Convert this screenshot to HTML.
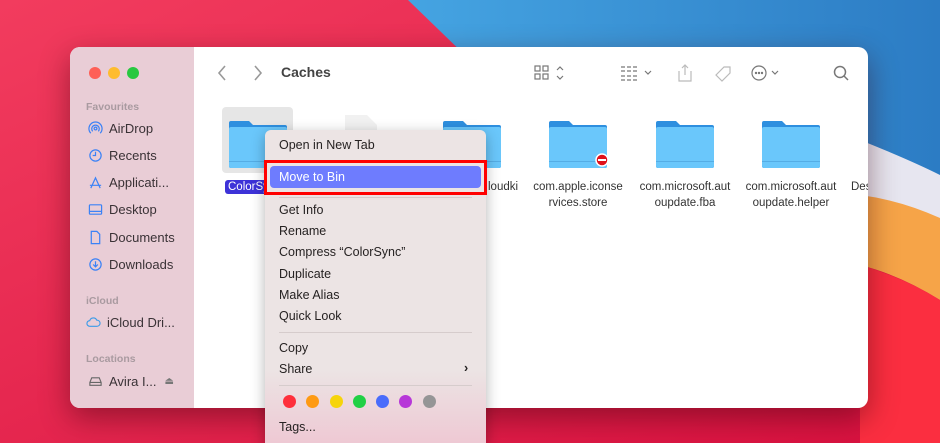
<!DOCTYPE html>
<html><head><style>
*{margin:0;padding:0;box-sizing:border-box}
html,body{width:940px;height:443px;overflow:hidden}
body{position:relative;font-family:"Liberation Sans",sans-serif;}
.bg{position:absolute;left:0;top:0}
.win{position:absolute;left:70px;top:47px;width:798px;height:361px;border-radius:10px;background:#fff;overflow:hidden;box-shadow:0 10px 30px rgba(60,0,10,.45)}
.side{position:absolute;left:0;top:0;width:124px;height:361px;background:#e9cdd6}
.dot{position:absolute;top:20px;width:12px;height:12px;border-radius:50%}
.sh{position:absolute;left:16px;font-size:10.5px;color:#a99aa0;font-weight:bold}
.si{position:absolute;left:18px;font-size:13px;color:#3a3236;display:flex;align-items:center;gap:6px}
.si svg{width:15px;height:15px}
.t{position:absolute;color:#3d3d3d;font-size:13px}
.lbl{position:absolute;font-size:11.5px;color:#333;text-align:center;line-height:16px;width:110px}
.menu{position:absolute;left:265px;top:130px;width:221px;height:320px;border-radius:6px;background:linear-gradient(#ece4e4 0,#ece4e4 240px,#eec6d2 320px);box-shadow:0 4px 14px rgba(0,0,0,.3);}
.mi{position:absolute;left:14px;font-size:12.5px;color:#262222}
.sep{position:absolute;left:14px;right:14px;height:1px;background:#d6cccc}
.cd{position:absolute;top:265px;width:13px;height:13px;border-radius:50%}
</style></head><body>
<svg class="bg" width="940" height="443">
<defs>
<linearGradient id="r" x1="0" y1="0" x2="1" y2="1"><stop offset="0" stop-color="#f23c5e"/><stop offset="1" stop-color="#d8103f"/></linearGradient>
<linearGradient id="b" x1="0" y1="0" x2="1" y2="0"><stop offset="0" stop-color="#45a4e2"/><stop offset="1" stop-color="#2c7cc4"/></linearGradient>
</defs>
<rect width="940" height="443" fill="url(#r)"/>
<path d="M408 0 L940 0 L940 200 Q700 130 470 60 Z" fill="url(#b)"/>
<path d="M860 190 Q910 200 940 215 L940 300 Q900 275 860 265 Z" fill="#f6a448"/>
<path d="M860 140 Q910 160 940 175 L940 218 Q900 200 860 195Z" fill="#e7e6f0"/>
<path d="M860 265 Q905 278 940 300 L940 443 L860 443Z" fill="#fb2e40"/>
</svg>
<div class="win">
<div class="side">
<div class="dot" style="left:19px;background:#fe5f57"></div>
<div class="dot" style="left:38px;background:#febc2e"></div>
<div class="dot" style="left:57px;background:#28c840"></div>
<div class="sh" style="top:54px">Favourites</div>
<div class="si" style="top:74px"><svg viewBox="0 0 16 16" fill="none" stroke="#3b82f6" stroke-width="1.3"><circle cx="8" cy="8" r="1.5"/><path d="M5 11a4 4 0 1 1 6 0M3 13a7 7 0 1 1 10 0"/></svg>AirDrop</div>
<div class="si" style="top:101px"><svg viewBox="0 0 16 16" fill="none" stroke="#3b82f6" stroke-width="1.3"><circle cx="8" cy="8" r="6"/><path d="M8 4v4H5"/></svg>Recents</div>
<div class="si" style="top:128px"><svg viewBox="0 0 16 16" fill="none" stroke="#3b82f6" stroke-width="1.3"><path d="M3 14 8 3l5 11M2 11h12"/></svg>Applicati...</div>
<div class="si" style="top:155px"><svg viewBox="0 0 16 16" fill="none" stroke="#3b82f6" stroke-width="1.3"><rect x="1.5" y="3" width="13" height="10" rx="1"/><path d="M1.5 10h13"/></svg>Desktop</div>
<div class="si" style="top:183px"><svg viewBox="0 0 16 16" fill="none" stroke="#3b82f6" stroke-width="1.3"><path d="M3.5 1.5h6l3 3v10h-9z"/></svg>Documents</div>
<div class="si" style="top:210px"><svg viewBox="0 0 16 16" fill="none" stroke="#3b82f6" stroke-width="1.3"><circle cx="8" cy="8" r="6"/><path d="M8 4.5v6M5.5 8l2.5 2.5L10.5 8"/></svg>Downloads</div>
<div class="sh" style="top:248px">iCloud</div>
<div class="si" style="top:268px;left:16px"><svg viewBox="0 0 16 16" fill="none" stroke="#3b9be8" stroke-width="1.2"><path d="M4 12a3 3 0 0 1 0-6 4 4 0 0 1 7.5-.5A3 3 0 0 1 12 12z"/></svg>iCloud Dri...</div>
<div class="sh" style="top:306px">Locations</div>
<div class="si" style="top:327px"><svg viewBox="0 0 16 16" fill="none" stroke="#666" stroke-width="1.2"><path d="M2 9 4 4h8l2 5v3H2z M2 9h12"/></svg>Avira I... <span style="color:#777;font-size:10px;margin-left:2px">⏏</span></div>
</div>
<svg style="position:absolute;left:145px;top:17px" width="50" height="18" fill="none" stroke="#999" stroke-width="1.6"><path d="M10 2 4 9l6 7"/><path d="M40 2l6 7-6 7"/></svg>
<div class="t" style="left:211px;top:17px;font-size:14px;font-weight:bold;color:#444">Caches</div>
<svg style="position:absolute;left:462px;top:16px" width="340" height="20" fill="none" stroke="#777" stroke-width="1.2">
<rect x="3" y="3" width="5" height="5"/><rect x="11" y="3" width="5" height="5"/><rect x="3" y="11" width="5" height="5"/><rect x="11" y="11" width="5" height="5"/>
<path d="M25 7l3-3 3 3M25 13l3 3 3-3"/>
<path d="M89 4h16M89 8h16M89 13h16M89 17h16" stroke-dasharray="4 2"/>
<path d="M113 8l3 3 3-3"/>
<path d="M150 5l3-3 3 3M153 2v10M147 8v10h12V8" stroke="#bbb"/>
<path d="M184 12l8-8h6v6l-8 8z" stroke="#bbb"/>
<circle cx="227" cy="10" r="7"/><circle cx="224" cy="10" r=".6"/><circle cx="227" cy="10" r=".6"/><circle cx="230" cy="10" r=".6"/>
<path d="M240 8l3 3 3-3"/>
<circle cx="308" cy="9" r="5.5" stroke-width="1.5"/><path d="M312 13l4 4" stroke-width="1.5"/>
</svg>
<div style="position:absolute;left:152px;top:60px;width:71px;height:66px;background:#e6e6e6;border-radius:4px"></div>
<svg style="position:absolute;left:0;top:0" width="798" height="140">
<defs><g id="f"><path d="M0 6a2 2 0 0 1 2-2h18l4 4h32a2 2 0 0 1 2 2v39a2 2 0 0 1-2 2H2a2 2 0 0 1-2-2z" fill="#2e8fdf"/><rect x="0" y="10" width="58" height="41" rx="2" fill="#6ac7fb"/><rect x="0" y="44" width="58" height="1" fill="#55ade5"/></g></defs>
<use href="#f" x="159" y="70"/>
<path d="M275 68h22l10 10v44h-32z" fill="#f1f1f1"/>
<use href="#f" x="373" y="70"/>
<use href="#f" x="479" y="70"/>
<circle cx="532" cy="113" r="6" fill="#e0101a" stroke="#fff" stroke-width="1.5"/><rect x="528" y="112" width="8" height="2" fill="#fff"/>
<use href="#f" x="586" y="70"/>
<use href="#f" x="692" y="70"/>
</svg>
<div style="position:absolute;left:155px;top:133px;background:#3d32d8;color:#fff;font-size:11.5px;padding:1px 3px;border-radius:3px">ColorSync</div>
<div class="lbl" style="top:132px;text-align:left;left:418px">loudki</div>
<div class="lbl" style="left:453px;top:132px">com.apple.iconse<br>rvices.store</div>
<div class="lbl" style="left:560px;top:132px">com.microsoft.aut<br>oupdate.fba</div>
<div class="lbl" style="left:666px;top:132px">com.microsoft.aut<br>oupdate.helper</div>
<div class="lbl" style="left:781px;top:132px;text-align:left">Des</div>
</div>
<div class="menu">
<div class="mi" style="top:8px">Open in New Tab</div>
<div style="position:absolute;left:-1px;top:30px;width:223px;height:35px;border:3px solid #f00"></div>
<div style="position:absolute;left:5px;top:36px;width:211px;height:22px;background:#6e7cfe;border-radius:4px"></div>
<div class="mi" style="top:40px;color:#fff">Move to Bin</div>
<div class="sep" style="top:67px"></div>
<div class="mi" style="top:73px">Get Info</div>
<div class="mi" style="top:94px">Rename</div>
<div class="mi" style="top:115px">Compress “ColorSync”</div>
<div class="mi" style="top:137px">Duplicate</div>
<div class="mi" style="top:158px">Make Alias</div>
<div class="mi" style="top:179px">Quick Look</div>
<div class="sep" style="top:202px"></div>
<div class="mi" style="top:211px">Copy</div>
<div class="mi" style="top:232px">Share</div>
<div class="mi" style="top:231px;left:199px;font-weight:bold">›</div>
<div class="sep" style="top:255px"></div>
<div class="cd" style="left:18px;background:#fe2f3b"></div>
<div class="cd" style="left:41px;background:#fe9a13"></div>
<div class="cd" style="left:65px;background:#f6d40b"></div>
<div class="cd" style="left:88px;background:#21d045"></div>
<div class="cd" style="left:111px;background:#4a6cfb"></div>
<div class="cd" style="left:134px;background:#b737d8"></div>
<div class="cd" style="left:158px;background:#959596"></div>
<div class="mi" style="top:290px">Tags...</div>
</div>
</body></html>
